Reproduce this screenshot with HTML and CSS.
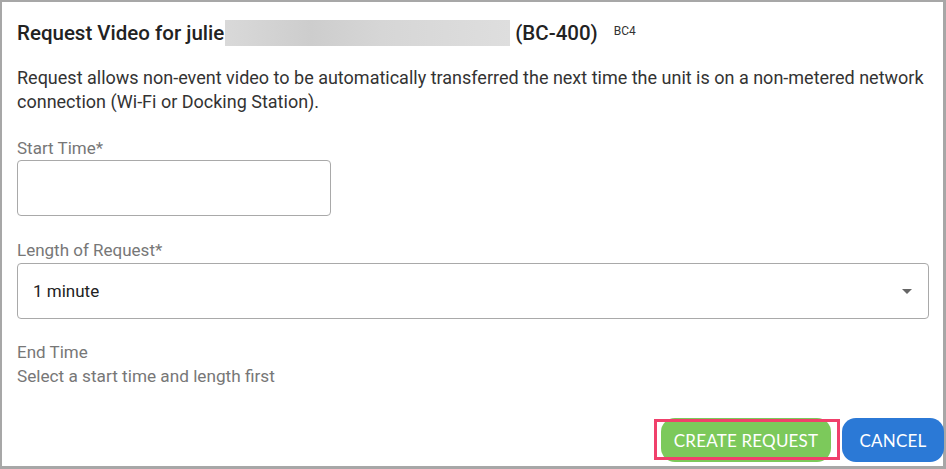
FILE: index.html
```html
<!DOCTYPE html>
<html lang="en">
<head>
    <meta charset="UTF-8">
    <title>Request Video</title>
    <link rel="stylesheet" href="styles.css">
</head>
<body>

<div class="dialog">
    <div class="dialog-title">
        <span class="title-text">Request Video for julie</span>
        <span class="redacted"></span>
        <span class="title-text">(BC-400)</span>
        <span class="unit-tag">BC4</span>
    </div>

    <p class="intro">Request allows non-event video to be automatically transferred the next time the unit is on a non-metered network connection (Wi-Fi or Docking Station).</p>

    <div class="field">
        <div class="field-label">Start Time*</div>
        <div class="input-box start-input"></div>
    </div>

    <div class="field">
        <div class="field-label">Length of Request*</div>
        <div class="input-box select-box">
            <span>1 minute</span>
            <span class="caret"></span>
        </div>
    </div>

    <div class="field end-field">
        <div class="field-label">End Time</div>
        <div class="field-hint">Select a start time and length first</div>
    </div>

    <div class="actions">
        <span class="highlight-wrap">
            <button class="btn btn-green">CREATE REQUEST</button>
            <span class="highlight"></span>
        </span>
        <button class="btn btn-blue">CANCEL</button>
    </div>
</div>

</body>
</html>
```

FILE: styles.css
```css
* {
    box-sizing: border-box;
}

body {
    margin: 0;
    font-family: Roboto, "Liberation Sans", sans-serif;
    background: #fff;
}

.dialog {
    width: 946px;
    height: 469px;
    border-style: solid;
    border-color: #a7a7a7;
    border-width: 2px 3px 3px 2px;
    padding: 0 14px 0 15px;
    display: flex;
    flex-direction: column;
}

.dialog-title {
    display: flex;
    align-items: center;
    margin-top: 17px;
    height: 28px;
}

.title-text {
    font-size: 20.5px;
    font-weight: 500;
    color: #222;
}

.redacted {
    width: 285px;
    height: 26px;
    margin: 0 5px 0 1px;
    background: linear-gradient(90deg, #d9d9d9 0%, #cdcdcd 30%, #d6d6d6 55%, #dedede 100%);
}

.unit-tag {
    font-size: 12px;
    color: #333;
    margin-left: 16px;
    margin-top: -5px;
}

.intro {
    margin: 19px 0 0;
    font-size: 18px;
    line-height: 24px;
    color: #333;
}

.field {
    margin-top: 23px;
}

.field-label {
    font-size: 17px;
    color: #777;
    line-height: 22px;
}

.input-box {
    margin-top: 1px;
    height: 56px;
    border: 1px solid #a9a9a9;
    border-radius: 4px;
}

.start-input {
    width: 314px;
}

.select-box {
    margin-top: 2px;
    display: flex;
    align-items: center;
    justify-content: space-between;
    padding: 0 16px 0 15px;
    font-size: 17px;
    color: #222;
}

.caret {
    width: 0;
    height: 0;
    border-left: 5px solid transparent;
    border-right: 5px solid transparent;
    border-top: 5px solid #666;
}

.end-field {
    margin-top: 22px;
}

.field-hint {
    font-size: 17.2px;
    color: #777;
    line-height: 24px;
    margin-top: 1px;
}

.actions {
    display: flex;
    justify-content: flex-end;
    align-items: center;
    margin-top: auto;
    margin-bottom: 4px;
    margin-right: -15px;
    gap: 7px;
}

.btn {
    border: 0;
    height: 44px;
    border-radius: 14px;
    color: #fff;
    font-family: Lato, "Open Sans", sans-serif;
    font-size: 17px;
    letter-spacing: 0.2px;
    cursor: pointer;
}

.btn-green {
    width: 170px;
    background: #7cc95b;
}

.btn-blue {
    width: 102px;
    background: #2b79d6;
}

.highlight-wrap {
    position: relative;
    display: inline-block;
    margin-right: 4px;
}

.highlight {
    position: absolute;
    left: -7px;
    right: -9px;
    top: 1px;
    bottom: 2px;
    border: 3px solid #f0406b;
    pointer-events: none;
}
```
